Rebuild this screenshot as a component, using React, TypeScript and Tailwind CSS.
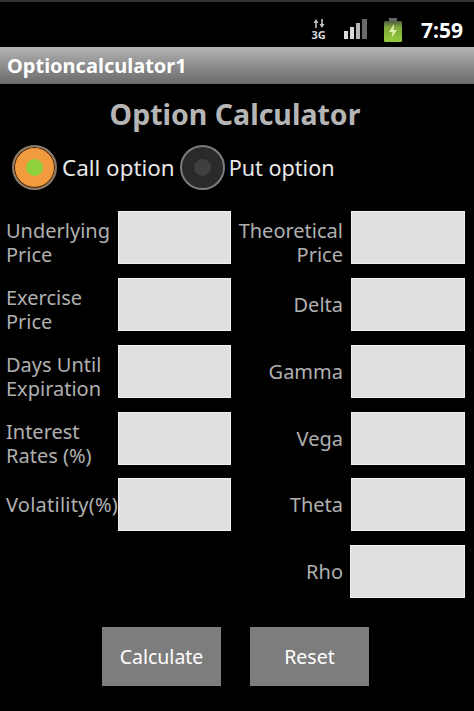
import React from "react";

const font = { fontFamily: '"Noto Sans", "Open Sans", sans-serif' };

const leftFields = [
  ["Underlying", "Price"],
  ["Exercise", "Price"],
  ["Days Until", "Expiration"],
  ["Interest", "Rates (%)"],
  ["Volatility(%)"],
];

const rightFields = [
  ["Theoretical", "Price"],
  ["Delta"],
  ["Gamma"],
  ["Vega"],
  ["Theta"],
  ["Rho"],
];

const Label = ({ lines, right }: { lines: string[]; right?: boolean }) => (
  <div className={`flex flex-col ${right ? "items-end" : "items-start"}`}>
    {lines.map((l) => (
      <span
        key={l}
        className={`block h-[24px] text-[20px] leading-[24px] text-[#b0b0b0] whitespace-nowrap ${
          l === "Volatility(%)" ? "tracking-[0.25px]" : ""
        }`}
      >
        {l}
      </span>
    ))}
  </div>
);

export default function App() {
  return (
    <div className="w-[474px] h-[711px] bg-black overflow-hidden flex flex-col" style={font}>
      <div className="h-[2px] bg-[#333333]" />
      <div className="h-[45px] flex items-center justify-end pr-[11px] pt-[10px]">
        <div className="w-[15px] h-[22px] mr-[18px] flex flex-col items-center">
          <svg width="14" height="10" viewBox="0 0 14 10">
            <path d="M4 0 L1.5 4 H3.2 V9 H4.8 V4 H6.5 Z M10 9 L7.5 5 H9.2 V0 H10.8 V5 H12.5 Z" fill="#c4c4c4" />
          </svg>
          <span className="block h-[11px] text-[11px] leading-[11px] font-bold text-[#d8d8d8]">3G</span>
        </div>
        <svg width="24" height="22" viewBox="0 0 24 22" className="mr-[16px]">
          <rect x="0" y="12" width="4" height="8" fill="#d9d9d9" />
          <rect x="6" y="8" width="4" height="12" fill="#d9d9d9" />
          <rect x="12" y="4" width="4" height="16" fill="#b5b5b5" />
          <rect x="18" y="0" width="5" height="20" fill="#6a6a6a" />
        </svg>
        <svg width="18" height="24" viewBox="0 0 18 24" className="mr-[19px]">
          <defs>
            <linearGradient id="battery" x1="0" y1="0" x2="0" y2="1">
              <stop offset="0" stopColor="#4f5a42" />
              <stop offset="0.3" stopColor="#7fa83a" />
              <stop offset="1" stopColor="#94cc3c" />
            </linearGradient>
          </defs>
          <rect x="5" y="0" width="8" height="3" fill="#666666" />
          <rect x="0" y="3" width="18" height="21" rx="1.5" fill="url(#battery)" />
          <path d="M10 6 L5 14 H8.5 L7.5 20 L13 12 H9.5 Z" fill="#dff0a8" />
        </svg>
        <span className="text-[21px] leading-[28px] font-bold text-white">7:59</span>
      </div>

      <div className="h-[37px] flex items-center pl-[7px] bg-gradient-to-b from-[#b4b4b4] to-[#6a6a6a]">
        <span className="text-[20px] font-bold leading-none text-white">Optioncalculator1</span>
      </div>

      <h1 className="mt-[12px] pr-[4px] text-center text-[28.5px] leading-[36px] font-bold text-[#b5b5b5]">
        Option Calculator
      </h1>

      <div className="mt-[12px] ml-[12px] flex items-center h-[46px]">
        <span className="w-[45px] h-[45px] shrink-0 rounded-full bg-[#f19a3e] border-2 border-[#8a7a6a] ring-1 ring-inset ring-[#3b1d08] flex items-center justify-center">
          <span className="w-[17px] h-[17px] rounded-full bg-[#8fd13a]" />
        </span>
        <span className="ml-[5px] pt-[2px] text-[22.4px] text-[#e8e8e8]">Call option</span>
        <span className="ml-[5px] w-[45px] h-[45px] shrink-0 rounded-full bg-[#2a2a2a] border-2 border-[#7c7c7c] flex items-center justify-center">
          <span className="w-[17px] h-[17px] rounded-full bg-[#3f3f3f]" />
        </span>
        <span className="ml-[4px] pt-[2px] text-[21.6px] text-[#e8e8e8]">Put option</span>
      </div>

      <div className="mt-[21px] flex">
        <div className="w-[231px] flex flex-col gap-[14px] shrink-0">
          {leftFields.map((lines, i) => (
            <div key={lines[0]} className={`h-[53px] flex items-center ${i === 4 ? "-mt-[1px]" : ""}`}>
              <div className={`w-[112px] ml-[6px] ${lines.length > 1 ? "pt-[10px]" : "pt-[1px]"}`}>
                <Label lines={lines} />
              </div>
              <div className="w-[113px] h-[53px] bg-[#e0e0e0] border border-[#f0f0f0]" />
            </div>
          ))}
        </div>
        <div className="w-[234px] flex flex-col gap-[14px] shrink-0">
          {rightFields.map((lines, i) => (
            <div key={lines[0]} className={`h-[53px] flex items-center ${i === 4 ? "-mt-[1px]" : ""}`}>
              <div className={`w-[112px] flex justify-end ${lines.length > 1 ? "pt-[10px]" : "pt-[1px]"}`}>
                <Label lines={lines} right />
              </div>
              {i === 5 ? (
                <div className="ml-[7px] w-[115px] h-[53px] bg-[#e0e0e0] border border-[#f0f0f0]" />
              ) : (
                <div className="ml-[8px] w-[114px] h-[53px] bg-[#e0e0e0] border border-[#f0f0f0]" />
              )}
            </div>
          ))}
        </div>
      </div>

      <div className="mt-[29px] flex justify-center pr-[3px] gap-[29px]">
        <button className="w-[119px] h-[59px] bg-[#7d7d7d] text-white text-[19.5px]">Calculate</button>
        <button className="w-[119px] h-[59px] bg-[#7d7d7d] text-white text-[19.5px]">Reset</button>
      </div>
    </div>
  );
}
